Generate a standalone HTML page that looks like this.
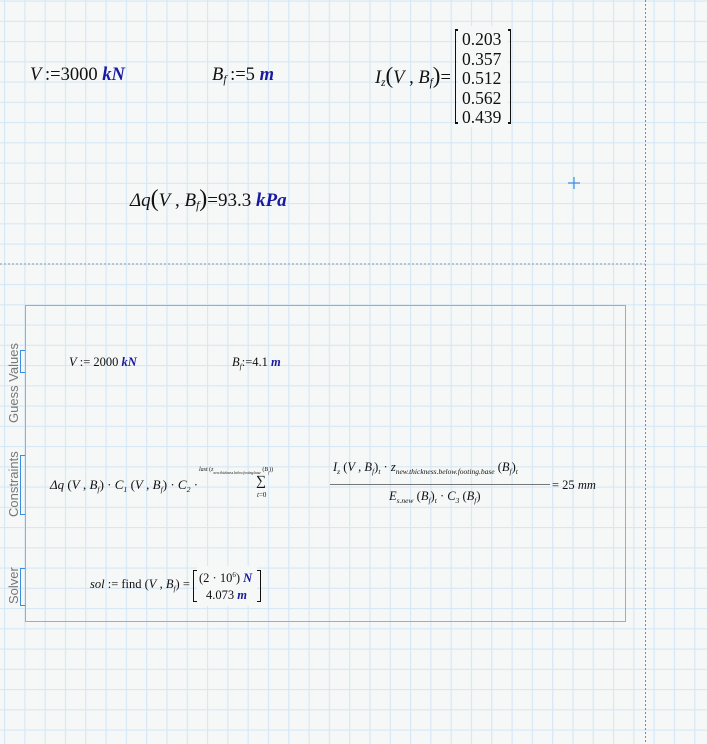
<!DOCTYPE html>
<html><head><meta charset="utf-8"><style>
html,body{margin:0;padding:0}
body{width:707px;height:744px;position:relative;overflow:hidden;background:#f5f8f6;font-family:"Liberation Serif",serif;color:#111}
.t{position:absolute;white-space:nowrap;line-height:1}
i{font-style:italic}
.u{color:#1a1aa0;font-weight:bold;font-style:italic}
sub{font-size:60%;vertical-align:-3px;font-style:italic}
.lab{position:absolute;font-family:"Liberation Sans",sans-serif;font-size:13px;color:#777;transform:rotate(-90deg);transform-origin:left top;white-space:nowrap}
.br{position:absolute;width:4px;border:1.5px solid #3a8ee0;border-right:none}
</style></head><body>
<svg width="707" height="744" style="position:absolute;left:0;top:0">
<defs><pattern id="g" x="4" y="0.5" width="20.3" height="20.25" patternUnits="userSpaceOnUse">
<path d="M0.5 0V20.25M0 0.5H20.3" stroke="#d6e7f6" stroke-width="1.3" fill="none"/></pattern></defs>
<rect width="707" height="744" fill="url(#g)"/>
<line x1="0" y1="264" x2="645" y2="264" stroke="#b8c4cf" stroke-width="2" stroke-dasharray="2,2"/>
<line x1="645.5" y1="0" x2="645.5" y2="744" stroke="#888" stroke-width="1" stroke-dasharray="2,2"/>
<rect x="25.5" y="305.5" width="600" height="316" fill="none" stroke="#aaa" stroke-width="1"/>
<path d="M574 177V189M568 183H580" stroke="#3a8ee0" stroke-width="1.2"/>
</svg>

<div class="t" style="left:30px;top:66px;font-size:18.5px"><i>V</i>&thinsp;:=3000 <span class="u">kN</span></div>
<div class="t" style="left:212px;top:66px;font-size:18.5px"><i>B<sub>f</sub></i>&thinsp;:=5 <span class="u">m</span></div>
<div class="t" style="left:375px;top:64px;font-size:18.5px"><i>I<sub>z</sub></i><span style="font-size:23px">(</span><i>V</i> , <i>B<sub>f</sub></i><span style="font-size:23px">)</span>=</div>
<div class="t" style="left:455px;top:29px;width:56px;height:95px;border:1.5px solid #111;border-top:2px solid #111;border-bottom:2px solid #111;box-sizing:border-box"></div>
<div class="t" style="left:458px;top:26px;width:50px;height:101px;background:#f5f8f6"></div>
<div class="t" style="left:462px;top:30px;font-size:17.5px;line-height:19.5px">0.203<br>0.357<br>0.512<br>0.562<br>0.439</div>

<div class="t" style="left:130px;top:187px;font-size:19px"><i>Δq</i><span style="font-size:24px">(</span><i>V</i> , <i>B<sub>f</sub></i><span style="font-size:24px">)</span>=93.3 <span class="u">kPa</span></div>

<div class="lab" style="left:6px;top:423px">Guess Values</div>
<div class="br" style="left:20px;top:350px;height:21px"></div>
<div class="lab" style="left:6px;top:517px">Constraints</div>
<div class="br" style="left:20px;top:455px;height:58px"></div>
<div class="lab" style="left:6px;top:604px">Solver</div>
<div class="br" style="left:20px;top:568px;height:36px"></div>

<div class="t" style="left:69px;top:356px;font-size:12.5px"><i>V</i> := 2000 <span class="u">kN</span></div>
<div class="t" style="left:232px;top:356px;font-size:12.5px"><i>B<sub>f</sub></i>:=4.1 <span class="u">m</span></div>

<div class="t" style="left:50px;top:478px;font-size:13px"><i>Δq</i> (<i>V</i> , <i>B<sub>f</sub></i>) · <i>C</i><sub>1</sub> (<i>V</i> , <i>B<sub>f</sub></i>) · <i>C</i><sub>2</sub> ·</div>
<div class="t" style="left:199px;top:467px;font-size:6px"><i>last</i> (<i>z</i><sub>new.thickness.below.footing.base</sub> (<i>B<sub>f</sub></i>))</div>
<div class="t" style="left:256px;top:475px;font-size:14px">∑</div>
<div class="t" style="left:257px;top:492px;font-size:7px"><i>t</i>=0</div>
<div class="t" style="left:333px;top:461px;font-size:12.5px"><i>I<sub>z</sub></i> (<i>V</i> , <i>B<sub>f</sub></i>)<sub>t</sub> · <i>z</i><sub>new.thickness.below.footing.base</sub> (<i>B<sub>f</sub></i>)<sub>t</sub></div>
<div class="t" style="left:330px;top:484px;width:220px;border-top:1px solid #777"></div>
<div class="t" style="left:389px;top:490px;font-size:12.5px"><i>E</i><sub>s.new</sub> (<i>B<sub>f</sub></i>)<sub>t</sub> · <i>C</i><sub>3</sub> (<i>B<sub>f</sub></i>)</div>
<div class="t" style="left:552px;top:479px;font-size:12.5px">= 25 <i>mm</i></div>

<div class="t" style="left:90px;top:578px;font-size:12.5px"><i>sol</i> := find (<i>V</i> , <i>B<sub>f</sub></i>) =</div>
<div class="t" style="left:193px;top:570px;width:68px;height:32px;border:1.5px solid #111;box-sizing:border-box"></div>
<div class="t" style="left:197px;top:566px;width:60px;height:40px;background:#f5f8f6"></div>
<div class="t" style="left:199px;top:572px;font-size:12.5px">(2 · 10<sup style="font-size:7px">6</sup>) <span class="u">N</span></div>
<div class="t" style="left:206px;top:589px;font-size:12.5px">4.073 <span class="u">m</span></div>
</body></html>
